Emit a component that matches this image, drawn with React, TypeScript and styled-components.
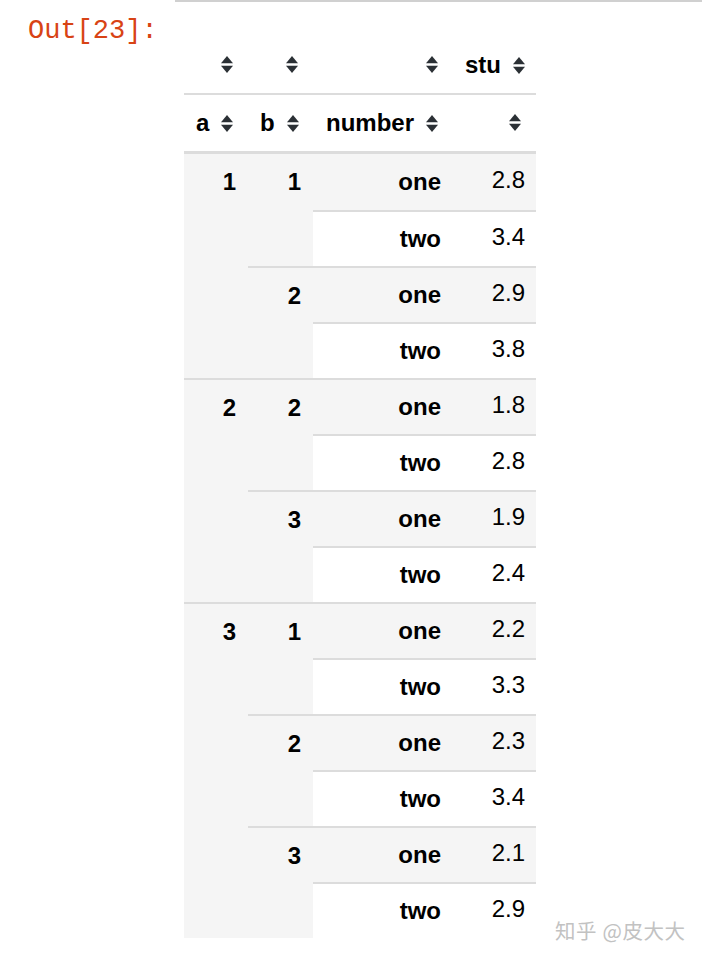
import React from "react";
import styled, { createGlobalStyle } from "styled-components";

const Global = createGlobalStyle`
  html, body { margin: 0; padding: 0; background: #ffffff; }
  body { font-family: "Liberation Sans", Arial, Helvetica, sans-serif; }
`;

const Page = styled.div`
  position: relative;
  width: 702px;
  min-height: 958px;
  overflow: hidden;
  display: flex;
  align-items: flex-start;
`;

const Prompt = styled.div`
  flex: 0 0 175px;
  box-sizing: border-box;
  padding: 15px 0 0 28px;
  font-family: "Liberation Mono", "Courier New", monospace;
  font-size: 27px;
  line-height: 32px;
  color: #d84315;
  white-space: nowrap;
`;

const OutputArea = styled.div`
  flex: 1;
  border-top: 2px solid #d0d0d0;
  padding: 35px 0 0 9px;
`;

const Table = styled.table`
  border-collapse: separate;
  border-spacing: 0;
  table-layout: fixed;
  width: 352px;
  color: #000;
  font-size: 24px;
`;

const HeadCell = styled.th<{ $h: number; $line: number }>`
  box-sizing: border-box;
  height: ${(p) => p.$h}px;
  padding: 0 15px 0 12px;
  text-align: right;
  vertical-align: middle;
  font-weight: bold;
  border-bottom: ${(p) => p.$line}px solid #dcdcdc;
  background: #ffffff;
  white-space: nowrap;
`;

const HeadInner = styled.span`
  display: inline-flex;
  align-items: center;
  gap: 12px;
`;

const IndexCell = styled.th<{ $top: boolean }>`
  box-sizing: border-box;
  padding: 0 12px;
  text-align: right;
  vertical-align: top;
  font-weight: bold;
  background: #f5f5f5;
  border-top: ${(p) => (p.$top ? "2px solid #dcdcdc" : "none")};
  line-height: 56px;
`;

const NameCell = styled.th<{ $top: boolean; $odd: boolean }>`
  box-sizing: border-box;
  height: 56px;
  padding: 0 12px;
  text-align: right;
  vertical-align: middle;
  font-weight: bold;
  background: ${(p) => (p.$odd ? "#f5f5f5" : "#ffffff")};
  border-top: ${(p) => (p.$top ? "2px solid #dcdcdc" : "none")};
`;

const ValueCell = styled.td<{ $top: boolean; $odd: boolean }>`
  box-sizing: border-box;
  height: 56px;
  padding: 0 11px 4px 12px;
  text-align: right;
  vertical-align: middle;
  font-weight: normal;
  background: ${(p) => (p.$odd ? "#f5f5f5" : "#ffffff")};
  border-top: ${(p) => (p.$top ? "2px solid #dcdcdc" : "none")};
`;

const Watermark = styled.div`
  position: absolute;
  left: 555px;
  top: 916px;
  font-family: "Noto Sans CJK SC", "Noto Sans", sans-serif;
  font-size: 20.5px;
  line-height: 28px;
  color: #c2c2c2;
  letter-spacing: 0.6px;
  white-space: nowrap;
`;

const SortIcon = () => (
  <svg width="12" height="17" viewBox="0 0 12 17" aria-hidden="true">
    <polygon points="6,0 12,7.3 0,7.3" fill="#2b3035" />
    <polygon points="0,9.7 12,9.7 6,17" fill="#2b3035" />
  </svg>
);

type Row = {
  a?: { v: string; span: number };
  b?: { v: string; span: number };
  n: string;
  s: string;
};

const rows: Row[] = [
  { a: { v: "1", span: 4 }, b: { v: "1", span: 2 }, n: "one", s: "2.8" },
  { n: "two", s: "3.4" },
  { b: { v: "2", span: 2 }, n: "one", s: "2.9" },
  { n: "two", s: "3.8" },
  { a: { v: "2", span: 4 }, b: { v: "2", span: 2 }, n: "one", s: "1.8" },
  { n: "two", s: "2.8" },
  { b: { v: "3", span: 2 }, n: "one", s: "1.9" },
  { n: "two", s: "2.4" },
  { a: { v: "3", span: 6 }, b: { v: "1", span: 2 }, n: "one", s: "2.2" },
  { n: "two", s: "3.3" },
  { b: { v: "2", span: 2 }, n: "one", s: "2.3" },
  { n: "two", s: "3.4" },
  { b: { v: "3", span: 2 }, n: "one", s: "2.1" },
  { n: "two", s: "2.9" },
];

export default function App() {
  return (
    <>
      <Global />
      <Page>
        <Prompt>Out[23]:</Prompt>
        <OutputArea>
          <Table>
            <colgroup>
              <col style={{ width: 64 }} />
              <col style={{ width: 65 }} />
              <col style={{ width: 140 }} />
              <col style={{ width: 83 }} />
            </colgroup>
            <thead>
              <tr>
                <HeadCell $h={58} $line={2}>
                  <HeadInner>
                    <SortIcon />
                  </HeadInner>
                </HeadCell>
                <HeadCell $h={58} $line={2}>
                  <HeadInner>
                    <SortIcon />
                  </HeadInner>
                </HeadCell>
                <HeadCell $h={58} $line={2}>
                  <HeadInner>
                    <SortIcon />
                  </HeadInner>
                </HeadCell>
                <HeadCell $h={58} $line={2}>
                  <HeadInner>
                    stu
                    <SortIcon />
                  </HeadInner>
                </HeadCell>
              </tr>
              <tr>
                <HeadCell $h={59} $line={3}>
                  <HeadInner>
                    a
                    <SortIcon />
                  </HeadInner>
                </HeadCell>
                <HeadCell $h={59} $line={3}>
                  <HeadInner>
                    b
                    <SortIcon />
                  </HeadInner>
                </HeadCell>
                <HeadCell $h={59} $line={3}>
                  <HeadInner>
                    number
                    <SortIcon />
                  </HeadInner>
                </HeadCell>
                <HeadCell $h={59} $line={3}>
                  <HeadInner>
                    <SortIcon />
                  </HeadInner>
                </HeadCell>
              </tr>
            </thead>
            <tbody>
              {rows.map((r, i) => {
                const top = i > 0;
                const odd = i % 2 === 0;
                return (
                  <tr key={i}>
                    {r.a && (
                      <IndexCell rowSpan={r.a.span} $top={top}>
                        {r.a.v}
                      </IndexCell>
                    )}
                    {r.b && (
                      <IndexCell rowSpan={r.b.span} $top={top}>
                        {r.b.v}
                      </IndexCell>
                    )}
                    <NameCell $top={top} $odd={odd}>
                      {r.n}
                    </NameCell>
                    <ValueCell $top={top} $odd={odd}>
                      {r.s}
                    </ValueCell>
                  </tr>
                );
              })}
            </tbody>
          </Table>
        </OutputArea>
        <Watermark>知乎 @皮大大</Watermark>
      </Page>
    </>
  );
}
